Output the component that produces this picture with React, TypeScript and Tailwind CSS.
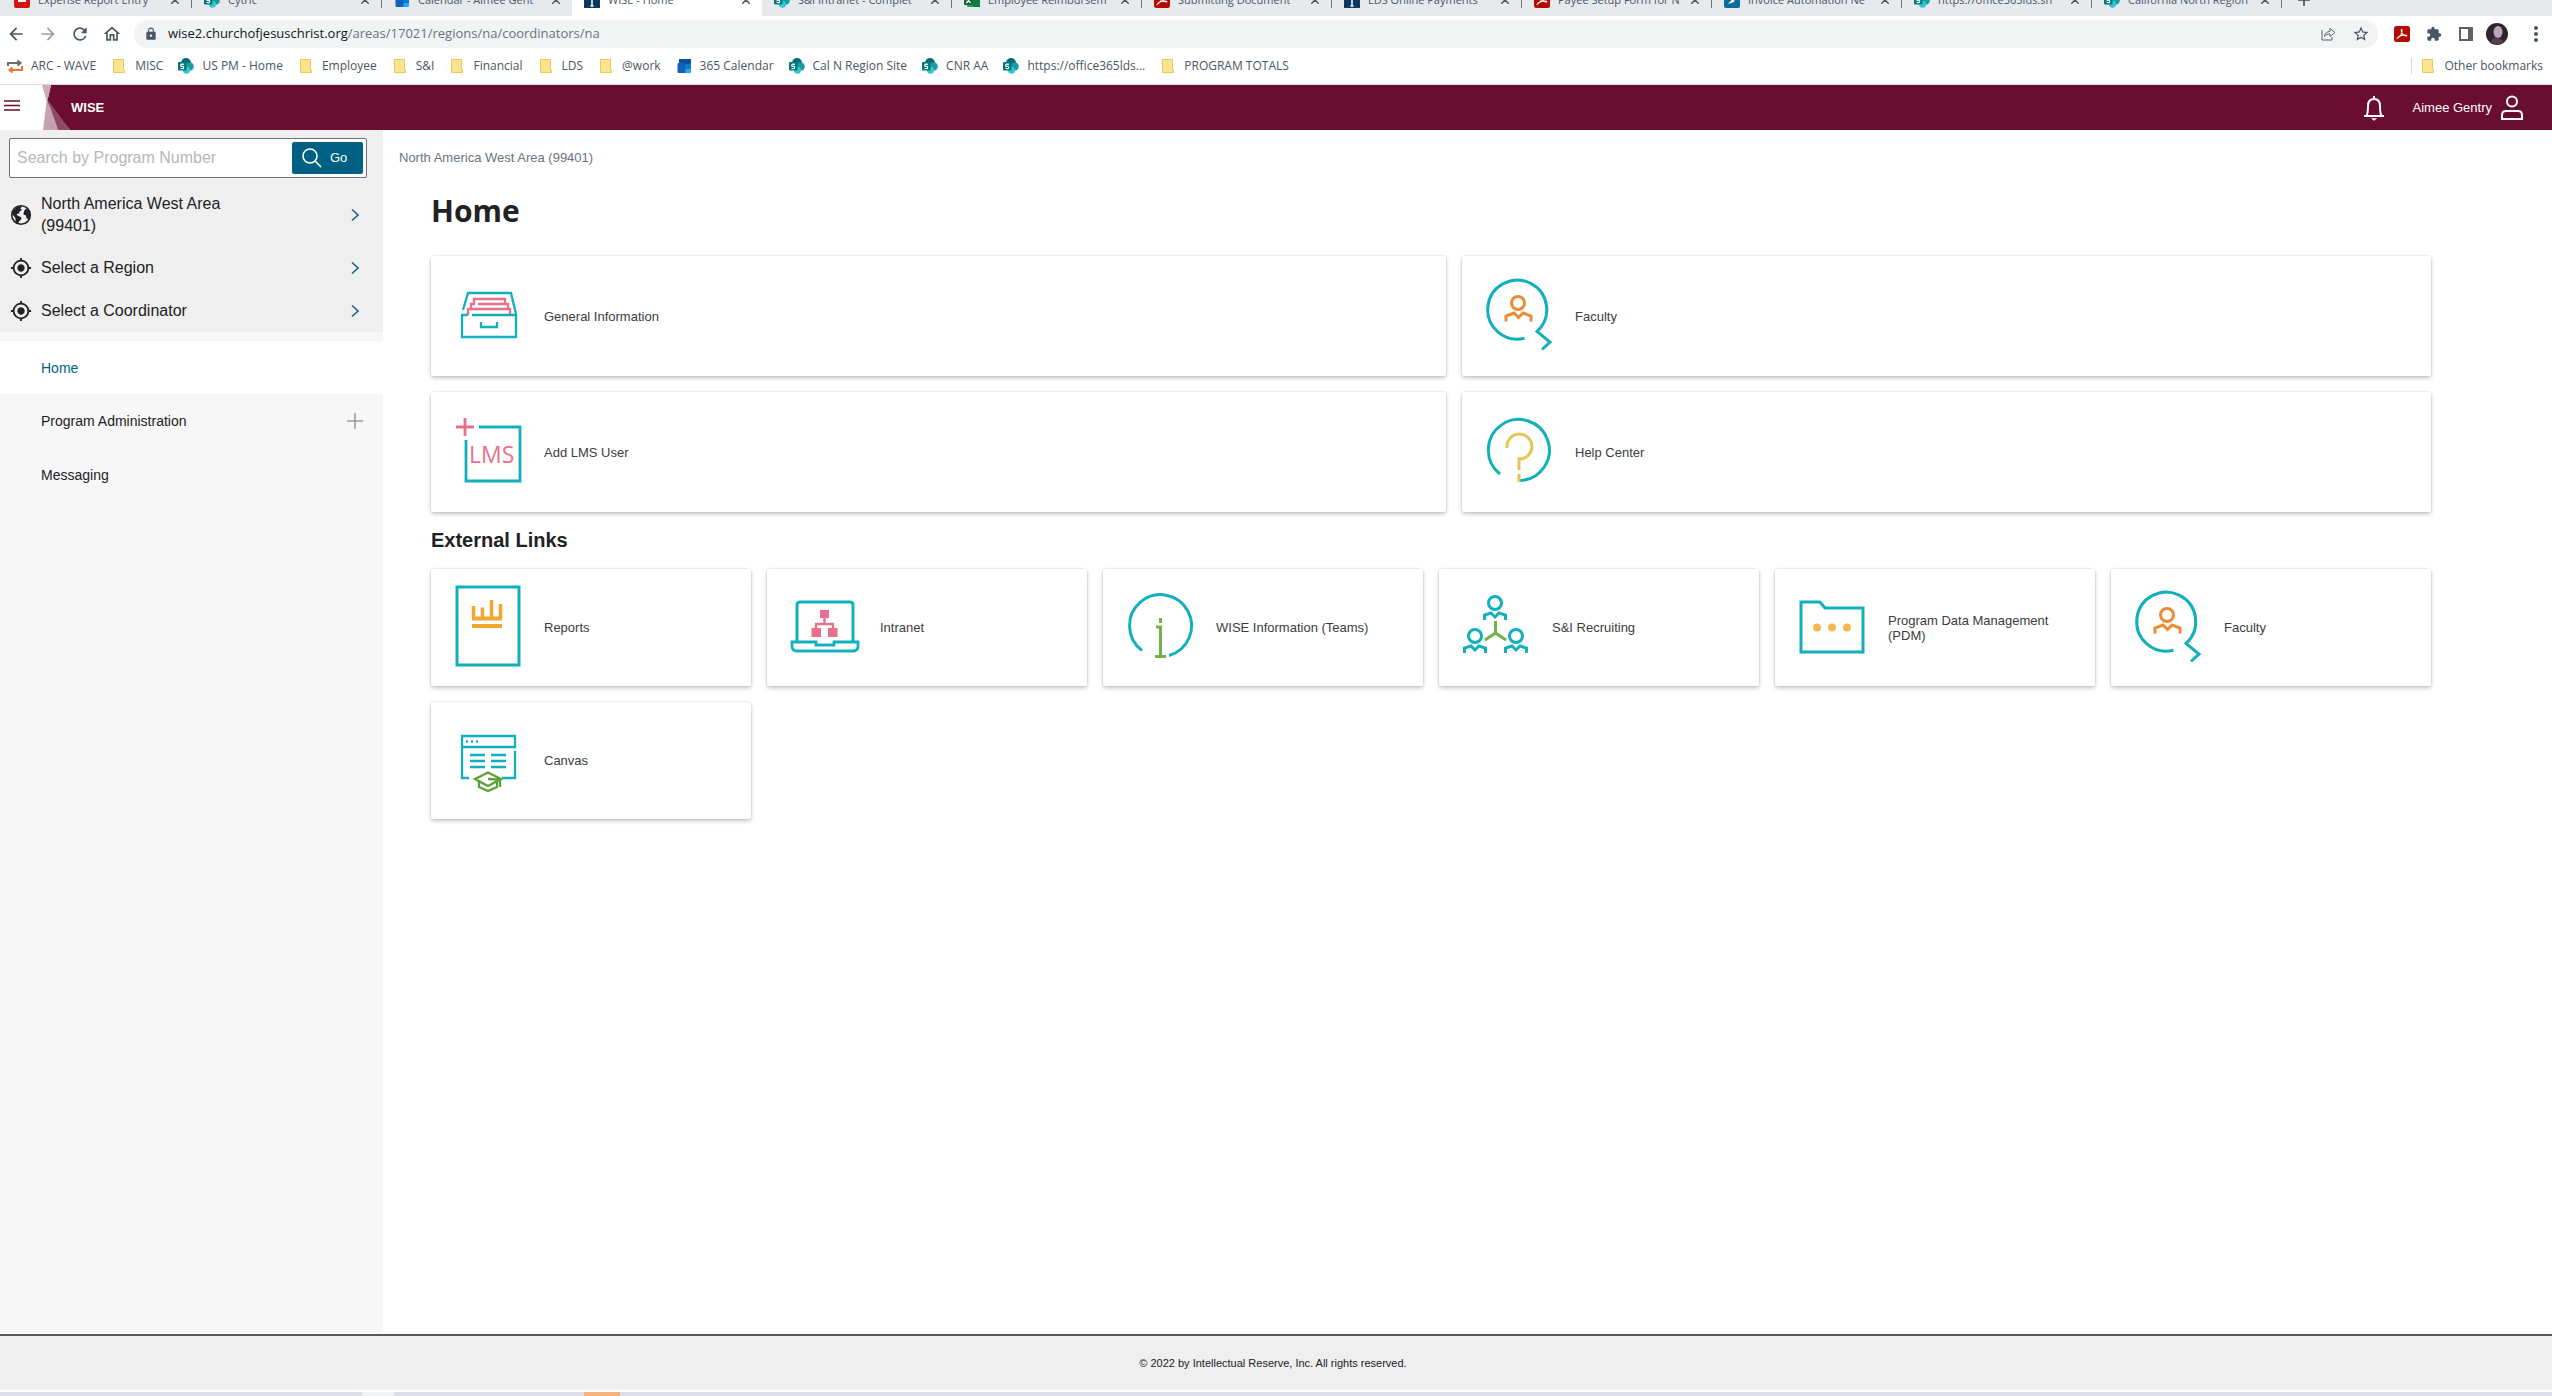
import React, { useState } from 'react';
import {
  MdArrowBack,
  MdArrowForward,
  MdExtension,
  MdLock,
  MdMoreVert,
  MdMyLocation,
  MdOutlineHome,
  MdRefresh,
  MdStarBorder,
} from 'react-icons/md';

type IconName = 'expense' | 'sharepoint' | 'calendar' | 'church' | 'excel' | 'pdf' | 'invoice' | 'folder' | 'arc';

const TEAL = '#12b0bc';
const PINK = '#e8708c';
const ORANGE = '#ec8b34';
const GREEN = '#6fb34a';

const tabs: { title: string; icon: IconName; active?: boolean }[] = [
  { title: 'Expense Report Entry', icon: 'expense' },
  { title: 'Cytric', icon: 'sharepoint' },
  { title: 'Calendar - Aimee Gent', icon: 'calendar' },
  { title: 'WISE - Home', icon: 'church', active: true },
  { title: 'S&I Intranet - Complet', icon: 'sharepoint' },
  { title: 'Employee Reimbursem', icon: 'excel' },
  { title: 'Submitting Document', icon: 'pdf' },
  { title: 'LDS Online Payments', icon: 'church' },
  { title: 'Payee Setup Form for N', icon: 'pdf' },
  { title: 'Invoice Automation Ne', icon: 'invoice' },
  { title: 'https://office365lds.sh', icon: 'sharepoint' },
  { title: 'California North Region', icon: 'sharepoint' },
];

const bookmarks: { title: string; icon: IconName }[] = [
  { title: 'ARC - WAVE', icon: 'arc' },
  { title: 'MISC', icon: 'folder' },
  { title: 'US PM - Home', icon: 'sharepoint' },
  { title: 'Employee', icon: 'folder' },
  { title: 'S&I', icon: 'folder' },
  { title: 'Financial', icon: 'folder' },
  { title: 'LDS', icon: 'folder' },
  { title: '@work', icon: 'folder' },
  { title: '365 Calendar', icon: 'calendar' },
  { title: 'Cal N Region Site', icon: 'sharepoint' },
  { title: 'CNR AA', icon: 'sharepoint' },
  { title: 'https://office365lds...', icon: 'sharepoint' },
  { title: 'PROGRAM TOTALS', icon: 'folder' },
];

const SiteIcon: React.FC<{ name: IconName }> = ({ name }) => (
  <svg viewBox="0 0 16 16" className="size-4 shrink-0" aria-hidden="true">
    {name === 'expense' && (
      <>
        <rect width="16" height="16" rx="2" fill="#d9140f" />
        <path d="M4 9h8" stroke="#fff" strokeWidth="2" />
      </>
    )}
    {name === 'sharepoint' && (
      <>
        <circle cx="8" cy="5" r="5" fill="#036c70" />
        <circle cx="11.5" cy="8.5" r="4.3" fill="#1a9ba1" />
        <circle cx="8.5" cy="12.3" r="3.5" fill="#37c6d0" />
        <rect x="0" y="4" width="8.5" height="8.5" rx="1" fill="#03787c" />
        <path d="M6 6.4Q3 5.6 2.8 7.1T4.3 8.4T5.6 9.8T2.5 10.3" fill="none" stroke="#fff" strokeWidth="1.2" />
      </>
    )}
    {name === 'calendar' && (
      <>
        <rect x="3" y="1" width="12" height="14" rx="1" fill="#28a8ea" />
        <rect x="3" y="1" width="12" height="5" fill="#0a4fa0" />
        <rect x="9" y="6" width="6" height="5" fill="#0f78d4" />
        <rect x="1.5" y="5" width="8" height="10" rx="1" fill="#0f64b8" />
      </>
    )}
    {name === 'church' && (
      <>
        <rect width="16" height="16" fill="#0d3a5e" />
        <path d="M8 3v11M6 7h4M6.5 14h3" stroke="#fff" strokeWidth="1.5" />
      </>
    )}
    {name === 'excel' && (
      <>
        <rect x="3" y="1" width="13" height="14" rx="1" fill="#21a366" />
        <rect x="9" y="8" width="7" height="7" fill="#107c41" />
        <rect y="4" width="9" height="9" rx="1" fill="#0f6b38" />
        <path d="M2.5 6l4 5M6.5 6l-4 5" stroke="#fff" strokeWidth="1.3" />
      </>
    )}
    {name === 'pdf' && (
      <>
        <rect width="16" height="16" rx="2.5" fill="#b30b00" />
        <path
          d="M3.5 12C6 11 8.500 7 8 4C7.500 3 7 4 7.500 5.500C8 8 10 10 12.500 10C13.500 9.500 12 8.800 10 9C7.500 9.300 4.500 10.500 3.500 12Z"
          fill="none"
          stroke="#fff"
          strokeWidth="1.1"
        />
      </>
    )}
    {name === 'invoice' && (
      <>
        <rect width="16" height="16" rx="2" fill="#0a6f9c" />
        <path d="M4 12L12 3L10 10Z" fill="#fff" />
      </>
    )}
    {name === 'folder' && <path d="M2.5 1.5H12.5V12H13.5V14.5H2.5Z" fill="#fbe48f" stroke="#ecc95c" />}
    {name === 'arc' && (
      <g fill="none" strokeWidth="2">
        <path d="M1 8V5H13M10.500 2.500L13.500 5L10.500 7.500" stroke="#6b6b6b" />
        <path d="M15 8V12H3M5.500 9.500L2.500 12L5.500 14.500" stroke="#e8762b" />
      </g>
    )}
  </svg>
);

const BrowserChrome: React.FC = () => (
  <div className="font-['Open_Sans',sans-serif] text-gray-600">
    <div className="flex h-4 items-end overflow-hidden bg-[#e7eaed] pl-0.5">
      {tabs.map((tab, i) => (
        <div
          key={i}
          className={`flex h-8 w-[190px] shrink-0 items-center pl-3 ${tab.active ? 'bg-white' : ''}`}
        >
          <SiteIcon name={tab.icon} />
          <span className="ml-2 flex-1 overflow-hidden text-[11px] whitespace-nowrap">{tab.title}</span>
          <svg viewBox="0 0 8 8" className="mx-3 size-2 shrink-0" aria-hidden="true">
            <path d="M0 0L8 8M8 0L0 8" stroke="#555" strokeWidth="1.5" />
          </svg>
          {!tab.active && i !== 2 && <span className="h-4 w-px bg-gray-500" />}
        </div>
      ))}
      <div className="flex h-8 items-center px-4">
        <svg viewBox="0 0 12 12" className="size-3" aria-hidden="true">
          <path d="M6 0V12M0 6H12" stroke="#444" strokeWidth="1.5" />
        </svg>
      </div>
    </div>

    <div className="flex h-9 items-center bg-white pr-1 pl-1.5">
      <div className="flex items-center gap-3 text-xl">
        <button aria-label="Back"><MdArrowBack /></button>
        <button aria-label="Forward" className="text-gray-400"><MdArrowForward /></button>
        <button aria-label="Reload"><MdRefresh /></button>
        <button aria-label="Home page"><MdOutlineHome /></button>
      </div>
      <div className="ml-3 flex h-7 flex-1 items-center gap-2.5 rounded-full bg-[#f2f3f3] pr-2 pl-2.5">
        <MdLock className="text-sm" />
        <p className="flex-1 text-[13px] text-gray-500">
          <span className="text-gray-900">wise2.churchofjesuschrist.org</span>/areas/17021/regions/na/coordinators/na
        </p>
        <button aria-label="Share">
          <svg viewBox="0 0 16 16" className="size-4" fill="none" stroke="#5f6368" aria-hidden="true">
            <path d="M2 4V14H12V11M4.500 10.500C5 7 7 5.500 10 5.500V2.500L15 6.500L10 10.500V8C7.500 8 6 8.500 4.500 10.500Z" />
          </svg>
        </button>
        <button aria-label="Bookmark" className="ml-1.5"><MdStarBorder className="text-lg" /></button>
      </div>
      <div className="ml-4 flex items-center gap-4">
        <button aria-label="Acrobat" className="flex"><SiteIcon name="pdf" /></button>
        <button aria-label="Extensions"><MdExtension className="text-base" /></button>
        <button aria-label="Side panel">
          <svg viewBox="0 0 16 16" className="size-4" aria-hidden="true">
            <path d="M2 2H14V14H2Z" fill="none" stroke="#5f6368" strokeWidth="2" />
            <path d="M10 2H14V14H10Z" fill="#5f6368" />
          </svg>
        </button>
        <button aria-label="Profile" className="-ml-1">
          <svg viewBox="0 0 22 22" className="size-[22px]" aria-hidden="true">
            <circle cx="11" cy="11" r="11" fill="#2c2530" />
            <ellipse cx="12" cy="9" rx="4.5" ry="6" fill="#b9a7b6" />
            <path d="M5 19Q6 14 11 15T18 19Q11 24 5 19Z" fill="#5d3b4a" />
          </svg>
        </button>
        <button aria-label="Menu"><MdMoreVert className="text-2xl" /></button>
      </div>
    </div>

    <div className="flex h-[33px] items-center gap-[15px] border-b border-[#e5dadd] bg-white pr-[9px] pb-1 pl-[7px] text-xs whitespace-nowrap">
      {bookmarks.map((b) => (
        <a key={b.title} href="#" className="flex items-center gap-2">
          <SiteIcon name={b.icon} />
          {b.title}
        </a>
      ))}
      <a href="#" className="ml-auto flex items-center gap-2 border-l border-gray-300 pl-2">
        <SiteIcon name="folder" />
        Other bookmarks
      </a>
    </div>
  </div>
);

const AppHeader: React.FC = () => (
  <header className="flex h-[45px] items-center bg-[#6b0d30] text-white">
    <button aria-label="Toggle menu" className="flex h-full w-[42px] items-center bg-white pb-1.5 pl-1">
      <svg viewBox="0 0 16 12" className="h-3 w-4" aria-hidden="true">
        <path d="M0 2H16M0 6.500H16M0 11H16" stroke="#6b0d30" strokeWidth="1.5" />
      </svg>
    </button>
    <svg viewBox="0 0 29 46" preserveAspectRatio="none" className="h-full w-[29px]" aria-hidden="true">
      <path d="M0 0H9L5 18L28 46H0Z" fill="#fff" />
      <path d="M0 0H9L5 18Z" fill="#cfa9b8" />
      <path d="M5 14L16 46H1Z" fill="#c4a0b0" />
      <path d="M5 14L28 46H16Z" fill="#8e4a67" />
    </svg>
    <h1 className="flex-1 text-[13px] font-bold">WISE</h1>
    <button aria-label="Notifications" className="mr-7">
      <svg viewBox="0 0 22 26" className="h-[26px] w-[22px]" fill="none" stroke="#fff" strokeWidth="2" aria-hidden="true">
        <path d="M1 21H21M3.500 21Q5 18 5 11Q5 4 11 4T17 11Q17 18 18.500 21M11 4V1" />
        <path d="M8.500 23.500H13.500L11 25.500Z" fill="#fff" strokeWidth="0.5" />
      </svg>
    </button>
    <button className="mr-7 flex items-center gap-2 pt-px text-[13px]">
      Aimee Gentry
      <svg viewBox="0 0 24 26" className="h-[26px] w-6" fill="none" stroke="#fff" strokeWidth="2" aria-hidden="true">
        <circle cx="12" cy="6.5" r="5" />
        <path d="M2 24V20Q2 16 6 16H18Q22 16 22 20V24Z" />
      </svg>
    </button>
  </header>
);

const Globe: React.FC = () => (
  <svg viewBox="0 0 22 22" className="size-[22px] shrink-0" aria-hidden="true">
    <circle cx="11" cy="11" r="9.3" fill="none" stroke="#212225" strokeWidth="1.6" />
    <path
      d="M3 7L7.500 2.500L12 2L10.500 4.500L12 6L9.500 7.500L9 9.500L6.500 10L8 12L11 13L11.500 15L9 17.500L8 20L5.500 18L5.500 14L2 10Z"
      fill="#212225"
    />
    <path d="M14 7L16 4.500L19.500 7L20.500 12L18.500 15L16.500 14.500L16 11.500L13.500 10.500Z" fill="#212225" />
  </svg>
);

const Chevron: React.FC = () => (
  <svg viewBox="0 0 8 14" className="mr-6 ml-auto h-3.5 w-2 shrink-0" fill="none" aria-hidden="true">
    <path d="M1 1.500L7 7L1 12.500" stroke="#1b6785" strokeWidth="1.6" />
  </svg>
);

const Sidebar: React.FC = () => {
  const [query, setQuery] = useState('');

  return (
    <aside className="w-[383px] shrink-0 bg-[#f7f7f7] text-[#212225]">
      <div className="bg-[#efefef] pt-2">
        <form
          className="mr-4 ml-[9px] flex h-10 items-center rounded-xs border border-gray-500 bg-white pr-[3px]"
          onSubmit={(e) => e.preventDefault()}
        >
          <input
            type="text"
            aria-label="Search by Program Number"
            placeholder="Search by Program Number"
            value={query}
            onChange={(e) => setQuery(e.target.value)}
            className="min-w-0 flex-1 pl-[7px] text-base outline-none placeholder:text-[#b5b8b8]"
          />
          <button type="submit" className="flex h-8 w-[71px] items-center gap-2 rounded-xs bg-[#006184] pl-2.5 text-[13px] text-white">
            <svg viewBox="0 0 20 20" className="size-5" fill="none" stroke="#fff" strokeWidth="1.6" aria-hidden="true">
              <circle cx="8" cy="8" r="7" />
              <path d="M13 13L19 19" />
            </svg>
            Go
          </button>
        </form>
        <div className="pt-1.5 text-base/[22px]">
          <button className="flex h-[62px] w-full items-center gap-[9px] pl-2.5 text-left">
            <Globe />
            <span className="max-w-[200px]">North America West Area (99401)</span>
            <Chevron />
          </button>
          <button className="flex h-[43px] w-full items-center gap-[9px] pl-2.5">
            <MdMyLocation className="size-[22px]" />
            Select a Region
            <Chevron />
          </button>
          <button className="flex h-[43px] w-full items-center gap-[9px] pl-2.5">
            <MdMyLocation className="size-[22px]" />
            Select a Coordinator
            <Chevron />
          </button>
        </div>
      </div>
      <nav className="pt-[9px] text-sm">
        <a href="#" className="flex h-[53px] items-center bg-white pl-[41px] text-[#006184]">Home</a>
        <button className="flex h-[54px] w-full items-center justify-between pr-5 pl-[41px]">
          Program Administration
          <svg viewBox="0 0 16 16" className="size-4" aria-hidden="true">
            <path d="M8 0V16M0 8H16" stroke="#9a9c9e" strokeWidth="1.5" />
          </svg>
        </button>
        <a href="#" className="flex h-[53px] items-center pl-[41px]">Messaging</a>
      </nav>
    </aside>
  );
};

const DrawerIcon = () => (
  <>
    <path d="M8 34L13 17H56L61 38" stroke={TEAL} />
    <path d="M13 39V33H55V38M16 33V28H19V23H50V28H53V33M23 28H50" stroke={PINK} />
    <path d="M13 39H7V61H61V39H17M26 46V51H42V46" stroke={TEAL} />
  </>
);

const LmsIcon = () => (
  <>
    <path d="M10 6V24M1 15H19" stroke={PINK} strokeWidth="2.8" />
    <path d="M24 15H65V69H11V28" stroke={TEAL} strokeWidth="2.8" />
    <text x="14" y="51" fontSize="23" fontFamily="'Open Sans', sans-serif" fontWeight="500" fill={PINK}>LMS</text>
  </>
);

const FacultyIcon = () => (
  <>
    <path d="M38.500 62.200A29.500 29.500 0 1 1 51 55.500L64 66L56 73.500" stroke={TEAL} strokeWidth="3" />
    <circle cx="32" cy="27" r="6.5" stroke={ORANGE} strokeWidth="3" />
    <path d="M20 45.500V40L28 37L32.500 41.500L37 37L45 40V45.500" stroke={ORANGE} strokeWidth="3" />
  </>
);

const HelpIcon = () => (
  <>
    <path d="M14 62A30.500 30.500 0 1 1 34 68.500" stroke={TEAL} strokeWidth="3" />
    <path d="M21 36A12.500 12.500 0 1 1 33 47V58M33 62V70" stroke="#e6c552" strokeWidth="3" />
  </>
);

const ReportsIcon = () => (
  <>
    <path d="M2 -1H64V77H2Z" stroke={TEAL} strokeWidth="3" />
    <path d="M18.500 18V30M27.500 19.500V30M36.500 12V30M45.500 16V30" stroke="#f2a72e" strokeWidth="3.5" />
    <path d="M17 30.500H47M17 38H47" stroke="#f2a72e" strokeWidth="4" />
  </>
);

const IntranetIcon = () => (
  <>
    <path d="M6 54V17Q6 14 9 14H59Q62 14 62 17V54" stroke={TEAL} strokeWidth="3" />
    <path d="M1 54H25V57H43V54H67V58Q67 63 62 63H6Q1 63 1 58Z" stroke={TEAL} strokeWidth="2.8" />
    <path d="M29 22H38V30H29ZM20.500 40H30V49H20.500ZM37 40H46.500V49H37Z" fill={PINK} />
    <path d="M33.500 30V36M25 41V36H42V41" stroke={PINK} />
  </>
);

const InfoIcon = () => (
  <>
    <path d="M15 62.500A31 31 0 1 1 42 67.500" stroke={TEAL} strokeWidth="3" />
    <path d="M28 68.500H39M33.500 68V39H29M33.500 30V35" stroke={GREEN} strokeWidth="3" />
  </>
);

const Person = ({ x, y }: { x: number; y: number }) => (
  <path
    transform={`translate(${x} ${y})`}
    d="M-6.500 0A6.500 6.500 0 1 1 6.500 0A6.500 6.500 0 1 1 -6.500 0M-10.500 17V12L-4 10L0 14L4 10L10.500 12V17"
    stroke={TEAL}
    strokeWidth="3"
  />
);

const RecruitingIcon = () => (
  <>
    <Person x={32} y={15} />
    <Person x={12} y={48} />
    <Person x={53} y={48} />
    <path d="M32.500 33V45L22 52M32.500 45L43 52" stroke={GREEN} strokeWidth="3" />
  </>
);

const FolderIcon = () => (
  <>
    <path d="M2 14H21L26 20H64V64H2Z" stroke={TEAL} strokeWidth="3" />
    <g fill="#f5b851">
      <circle cx="18" cy="39.5" r="4" />
      <circle cx="33" cy="39.5" r="4" />
      <circle cx="48" cy="39.5" r="4" />
    </g>
  </>
);

const CanvasIcon = () => (
  <>
    <path d="M7 26V15H60V26H7V57H14M60 30V57H47" stroke={TEAL} />
    <path d="M11 20.500H13M16 20.500H18M21 20.500H23" stroke={TEAL} />
    <path d="M15 34H30M36 34H51M15 40H30M36 40H51M15 46H30M36 46H51" stroke={TEAL} />
    <path d="M20 58L33 51.500L46 58L33 65ZM24 61V66L33 70L42 66V61M33 58L45 58.500V66" stroke="#5aa03c" />
  </>
);

interface CardProps {
  title: string;
  icon: React.FC;
}

const mainCards: CardProps[] = [
  { title: 'General Information', icon: DrawerIcon },
  { title: 'Faculty', icon: FacultyIcon },
  { title: 'Add LMS User', icon: LmsIcon },
  { title: 'Help Center', icon: HelpIcon },
];

const externalCards: CardProps[] = [
  { title: 'Reports', icon: ReportsIcon },
  { title: 'Intranet', icon: IntranetIcon },
  { title: 'WISE Information (Teams)', icon: InfoIcon },
  { title: 'S&I Recruiting', icon: RecruitingIcon },
  { title: 'Program Data Management (PDM)', icon: FolderIcon },
  { title: 'Faculty', icon: FacultyIcon },
  { title: 'Canvas', icon: CanvasIcon },
];

const Card: React.FC<CardProps> = ({ title, icon: Icon }) => (
  <a
    href="#"
    className="flex h-full items-center gap-[25px] rounded-xs bg-white px-6 text-[13px]/[15px] text-[#3a3d40] shadow-[0_2px_4px_rgba(0,0,0,0.22),0_0_2px_rgba(0,0,0,0.15)]"
  >
    <svg viewBox="0 0 64 80" className="h-20 w-16 shrink-0 overflow-visible" fill="none" strokeWidth="2.3" aria-hidden="true">
      <Icon />
    </svg>
    {title}
  </a>
);

const App: React.FC = () => {
  return (
    <div className="flex min-h-screen flex-col bg-white font-['Liberation_Sans',Arial,sans-serif]">
      <BrowserChrome />
      <AppHeader />
      <div className="flex flex-1">
        <Sidebar />
        <main className="min-w-0 flex-1 text-[#212225]">
          <p className="pt-5 pl-4 text-[13px]/[15px] text-gray-500">North America West Area (99401)</p>
          <div className="mr-[121px] ml-12">
            <h2 className="pt-[22px] font-['Open_Sans',sans-serif] text-[30px]/[48px] font-bold">Home</h2>
            <div className="mt-[21px] grid auto-rows-[120px] grid-cols-[1015fr_969fr] gap-4">
              {mainCards.map((card) => (
                <Card key={card.title} {...card} />
              ))}
            </div>
            <h3 className="mt-4 text-xl/6 font-bold">External Links</h3>
            <div className="mt-[17px] grid auto-rows-[117px] grid-cols-6 gap-4">
              {externalCards.map((card) => (
                <Card key={card.title} {...card} />
              ))}
            </div>
          </div>
        </main>
      </div>
      <footer className="mt-px flex h-14 items-center justify-center border-t-2 border-[#555b58] bg-[#efefef] pt-px pr-1.5 text-[11px] text-[#212225]">
        © 2022 by Intellectual Reserve, Inc. All rights reserved.
      </footer>
      <div className="mt-0.5 flex h-1 bg-[#dcdfea]">
        <div className="ml-[362px] w-8 bg-[#f3f4f8]" />
        <div className="ml-[190px] w-9 bg-[#f5b27a]" />
      </div>
    </div>
  );
};

export default App;
